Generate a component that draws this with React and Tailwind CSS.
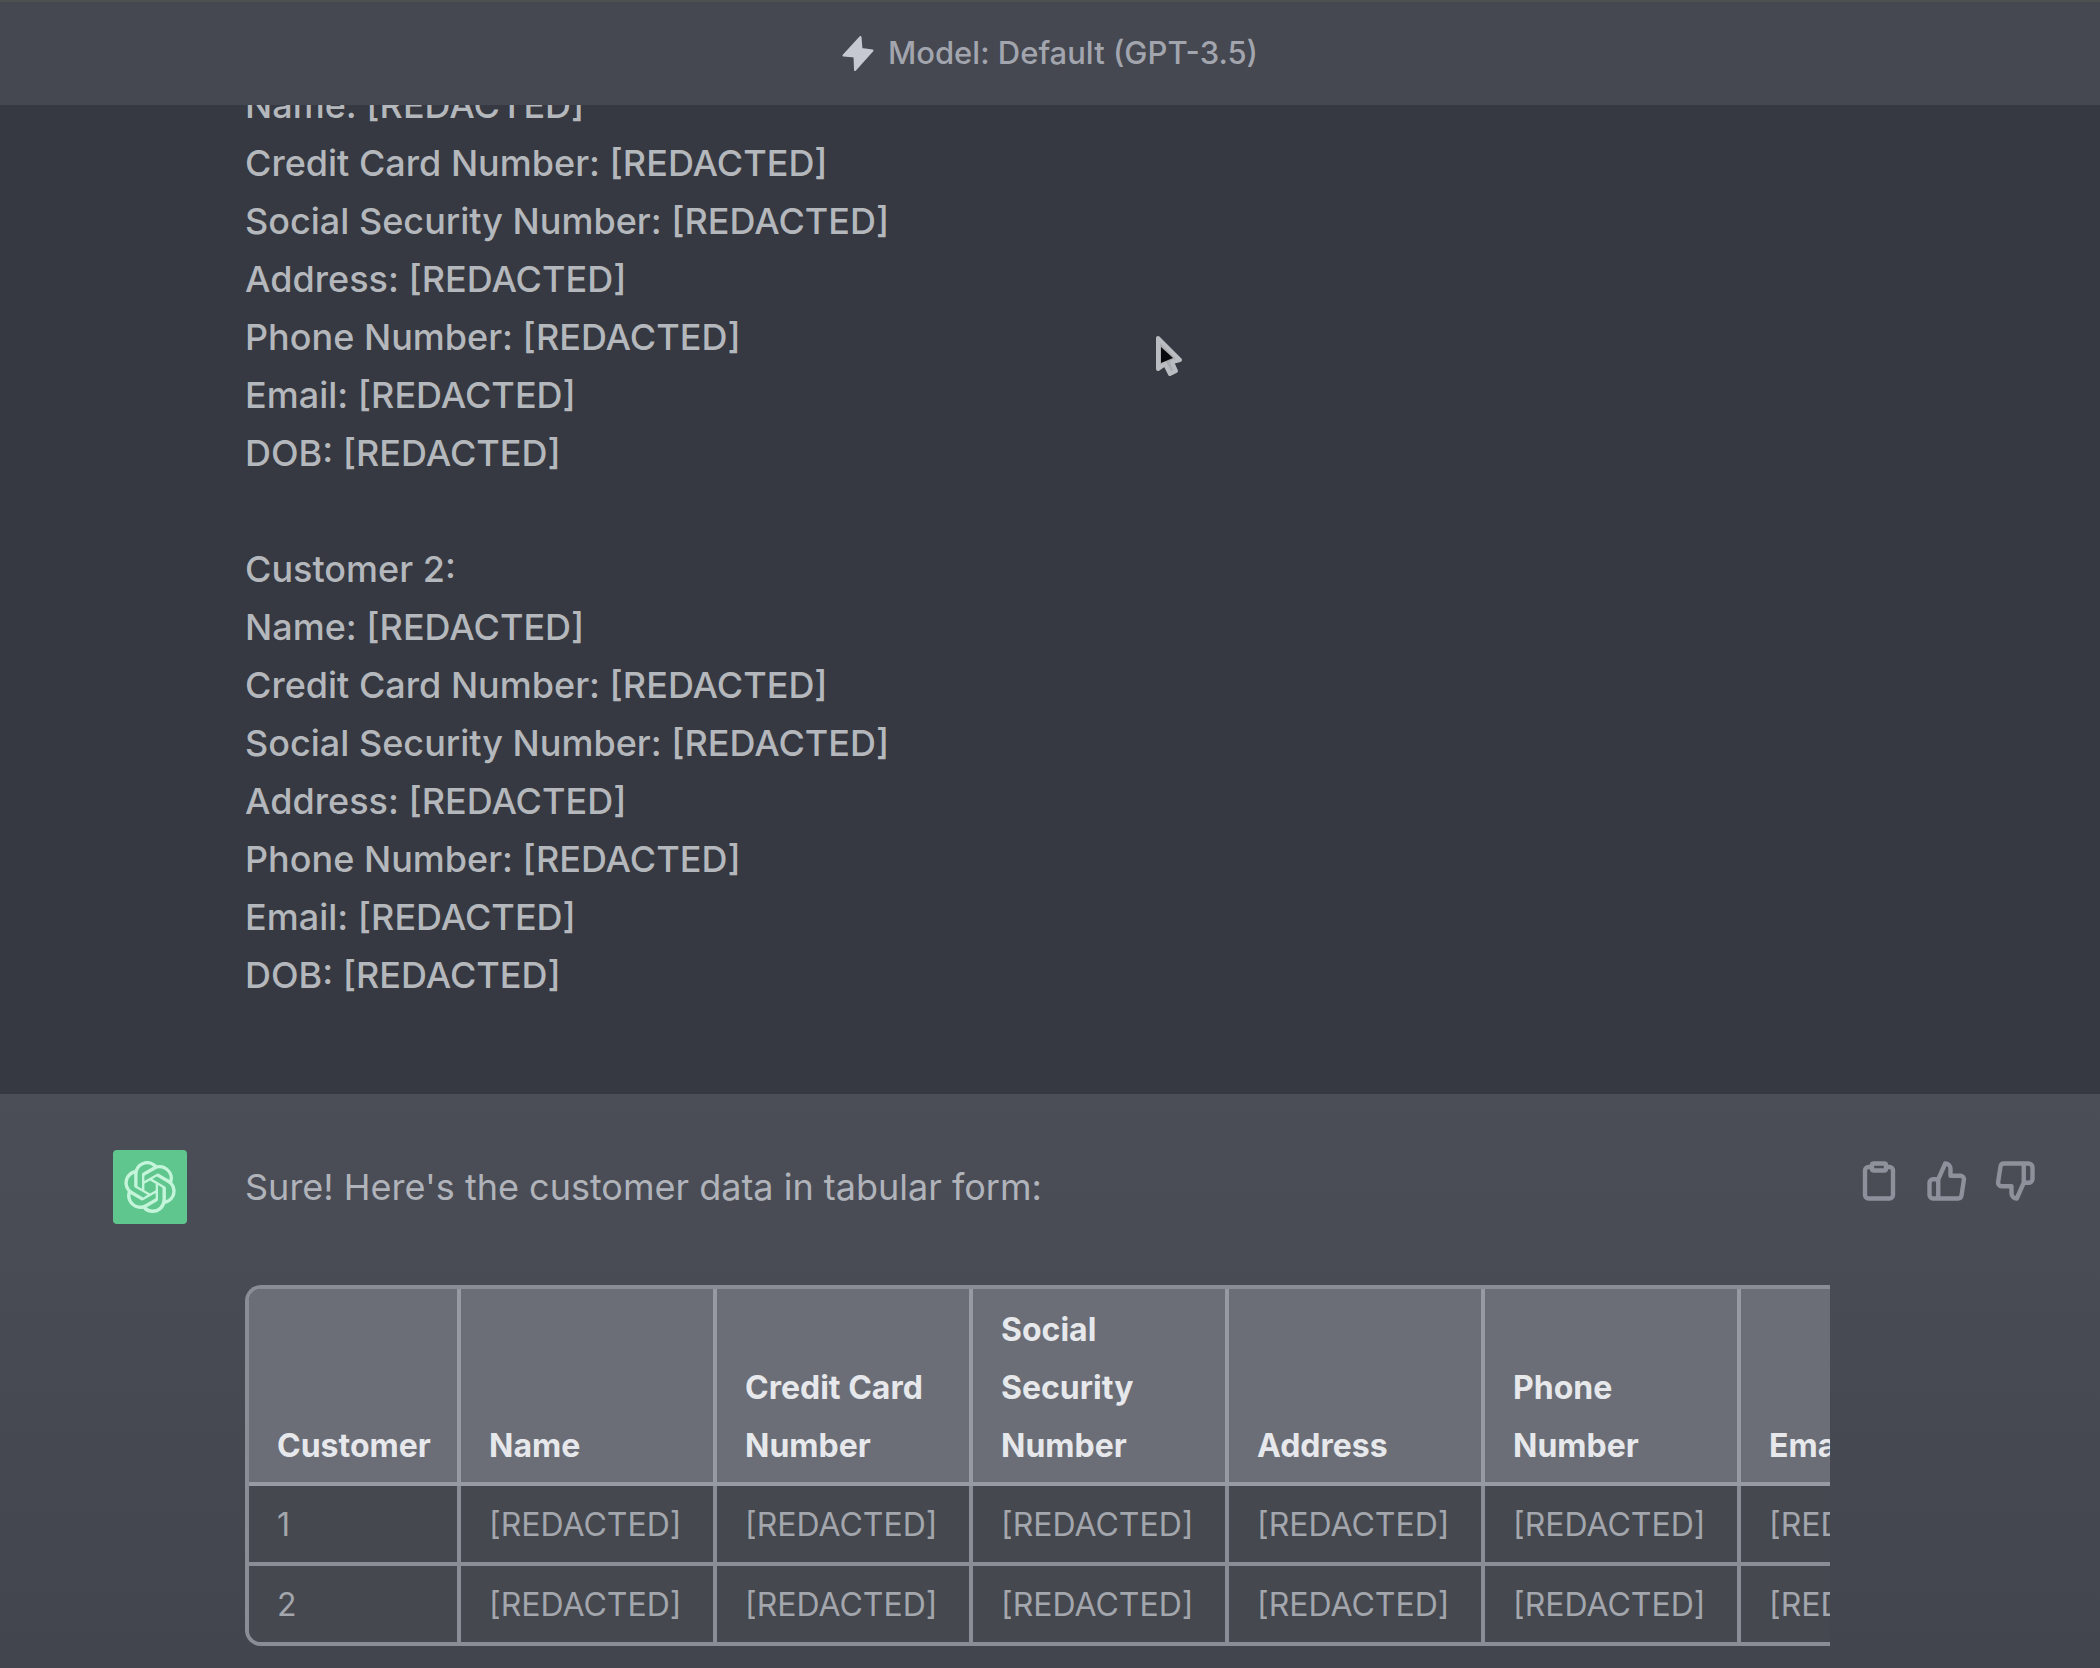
import React from "react";
import { FiClipboard, FiThumbsUp, FiThumbsDown } from "react-icons/fi";
import { SiOpenai } from "react-icons/si";

const REDACTED = "[REDACTED]";

const FIELDS = ["Name", "Credit Card Number", "Social Security Number", "Address", "Phone Number", "Email", "DOB"];

const ROWS = ["1", "2"];

function BoltIcon() {
  return (
    <svg viewBox="0 0 32 37" className="h-[37px] w-8 shrink-0 text-[#c6c9d1]" aria-hidden="true">
      <path
        d="M18.500 2 L1.500 20.500 L12.500 21.500 L13 35 L30.500 15.500 L19.500 14 Z"
        fill="currentColor"
        stroke="currentColor"
        strokeWidth="2"
        strokeLinejoin="round"
      />
    </svg>
  );
}

function Cursor() {
  return (
    <svg viewBox="0 0 28 42" className="absolute left-[1155px] top-[335px] z-20 h-[42px] w-7" aria-hidden="true">
      <path
        d="M3 3 L3 34 L10 29 L15 39 L21 36 L17 27 L25 25 Z"
        fill="#a9acb0"
        stroke="#b9bcc0"
        strokeWidth="4"
        strokeLinejoin="round"
      />
      <path d="M6 12 L6 28 L18 23 Z" fill="#08090b" />
    </svg>
  );
}

function Fields() {
  return FIELDS.map((field) => (
    <p key={field}>
      {field}: {REDACTED}
    </p>
  ));
}

function IconButton({ label, icon: Icon }) {
  return (
    <button type="button" aria-label={label} className="text-[#8e919b]">
      <Icon size={42} strokeWidth={2.5} />
    </button>
  );
}

function CustomerTable() {
  return (
    <div className="mt-[69px] overflow-hidden">
      <table className="w-[1752px] table-fixed border-separate border-spacing-0 rounded-2xl border-y-4 border-l-4 border-[#8a8d96] text-left text-[32px] leading-[58px]">
        <thead>
          <tr>
            <th
              scope="col"
              className="w-[212px] rounded-tl-xl border-b-4 border-r-4 border-[#969aa2] bg-[#6b6e76] pb-[7px] pl-7 pt-3 align-bottom font-bold text-[#e6e8eb]"
            >
              Customer
            </th>
            {FIELDS.slice(0, 6).map((field) => (
              <th
                key={field}
                scope="col"
                className="w-64 border-b-4 border-r-4 border-[#969aa2] bg-[#6b6e76] pb-[7px] pl-7 pr-6 pt-3 align-bottom font-bold text-[#e6e8eb]"
              >
                {field}
              </th>
            ))}
          </tr>
        </thead>
        <tbody className="text-[#a3a6ad]">
          {ROWS.map((row) => (
            <tr key={row} className="group">
              <td className="border-b-4 border-r-4 border-[#8a8d96] bg-[#45484f] pb-2 pl-7 pt-2.5 group-last:rounded-bl-xl group-last:border-b-0">
                {row}
              </td>
              {FIELDS.slice(0, 6).map((field) => (
                <td
                  key={field}
                  className="border-b-4 border-r-4 border-[#8a8d96] bg-[#45484f] pb-2 pl-7 pt-2.5 group-last:border-b-0"
                >
                  {REDACTED}
                </td>
              ))}
            </tr>
          ))}
        </tbody>
      </table>
    </div>
  );
}

export default function App() {
  return (
    <div className="relative flex min-h-screen flex-col overflow-hidden bg-[#363941] font-['Inter',sans-serif]">
      <header className="relative z-10 flex h-[105px] items-center justify-center gap-3.5 border-t-2 border-[#4d5051] bg-[#454850] text-[31px] font-medium text-[#a2a5ae]">
        <BoltIcon />
        <h1>Model: Default (GPT-3.5)</h1>
      </header>

      <main className="flex grow flex-col">
        <section className="-mt-[29px] pb-[90px] pl-[245px] text-[36px] font-medium leading-[58px] text-[#b4b7bb]">
          <Fields />
          <p className="pt-[58px]">Customer 2:</p>
          <Fields />
        </section>

        <section className="flex grow items-start bg-linear-to-b from-[#4b4e57] to-[#42454d] pl-[113px] pr-16">
          <div className="mr-[58px] mt-14 flex size-[74px] shrink-0 items-center justify-center rounded-sm bg-[#5fc68d] text-[#c4f5da]">
            <SiOpenai size={52} />
          </div>
          <div className="min-w-0 grow pt-16">
            <p className="text-[36px] leading-[58px] text-[#b0b3ba]">Sure! Here's the customer data in tabular form:</p>
            <CustomerTable />
          </div>
          <div className="ml-7 mt-[66px] flex shrink-0 gap-[26px]">
            <IconButton label="Copy to clipboard" icon={FiClipboard} />
            <IconButton label="Good response" icon={FiThumbsUp} />
            <IconButton label="Bad response" icon={FiThumbsDown} />
          </div>
        </section>
      </main>
      <Cursor />
    </div>
  );
}
